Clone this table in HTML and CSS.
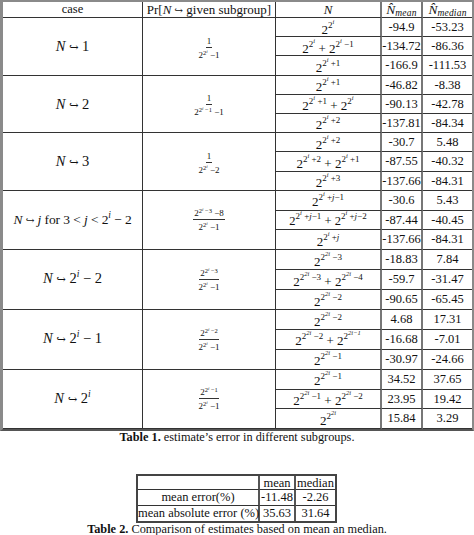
FILE: index.html
```html
<!DOCTYPE html>
<html>
<head>
<meta charset="utf-8">
<link rel="stylesheet" href="styles.css">
</head>
<body>
<div class="t1">
  <div class="h">case</div>
  <div class="h">Pr[<i>N</i> <span class="arr">↪</span> given subgroup]</div>
  <div class="h sep"><i>N</i></div>
  <div class="h nb sep"><i>N̂</i><sub>mean</sub></div>
  <div class="h nb last"><i>N̂</i><sub>median</sub></div>

  <div class="case"><i>N</i> <span class="arr">↪</span> 1</div>
  <div class="fr"><span class="frac"><span class="num">1</span><span class="den">2<sup class="s1">2<sup class="s2">i</sup></sup> −1</span></span></div>
  <div class="n">2<sup class="e1">2<sup class="e2">i</sup></sup></div>
  <div class="v sep">-94.9</div><div class="v last">-53.23</div>
  <div class="n">2<sup class="e1">2<sup class="e2">i</sup></sup> + 2<sup class="e1">2<sup class="e2">i</sup> −1</sup></div>
  <div class="v sep">-134.72</div><div class="v last">-86.36</div>
  <div class="n">2<sup class="e1">2<sup class="e2">i</sup> +1</sup></div>
  <div class="v sep">-166.9</div><div class="v last">-111.53</div>

  <div class="case"><i>N</i> <span class="arr">↪</span> 2</div>
  <div class="fr"><span class="frac"><span class="num">1</span><span class="den">2<sup class="s1">2<sup class="s2">i</sup> −1</sup> −1</span></span></div>
  <div class="n">2<sup class="e1">2<sup class="e2">i</sup> +1</sup></div>
  <div class="v sep">-46.82</div><div class="v last">-8.38</div>
  <div class="n">2<sup class="e1">2<sup class="e2">i</sup> +1</sup> + 2<sup class="e1">2<sup class="e2">i</sup></sup></div>
  <div class="v sep">-90.13</div><div class="v last">-42.78</div>
  <div class="n">2<sup class="e1">2<sup class="e2">i</sup> +2</sup></div>
  <div class="v sep">-137.81</div><div class="v last">-84.34</div>

  <div class="case"><i>N</i> <span class="arr">↪</span> 3</div>
  <div class="fr"><span class="frac"><span class="num">1</span><span class="den">2<sup class="s1">2<sup class="s2">i</sup></sup> −2</span></span></div>
  <div class="n">2<sup class="e1">2<sup class="e2">i</sup> +2</sup></div>
  <div class="v sep">-30.7</div><div class="v last">5.48</div>
  <div class="n">2<sup class="e1">2<sup class="e2">i</sup> +2</sup> + 2<sup class="e1">2<sup class="e2">i</sup> +1</sup></div>
  <div class="v sep">-87.55</div><div class="v last">-40.32</div>
  <div class="n">2<sup class="e1">2<sup class="e2">i</sup> +3</sup></div>
  <div class="v sep">-137.66</div><div class="v last">-84.31</div>

  <div class="case tight"><i>N</i> <span class="arr">↪</span> <i>j</i> for 3 &lt; <i>j</i> &lt; 2<sup class="ci">i</sup> − 2</div>
  <div class="fr"><span class="frac"><span class="num">2<sup class="s1">2<sup class="s2">i</sup> −3</sup> −8</span><span class="den">2<sup class="s1">2<sup class="s2">i</sup></sup> −1</span></span></div>
  <div class="n">2<sup class="e1">2<sup class="e2">i</sup> +<i>j</i>−1</sup></div>
  <div class="v sep">-30.6</div><div class="v last">5.43</div>
  <div class="n tightn">2<sup class="e1">2<sup class="e2">i</sup> +<i>j</i>−1</sup> + 2<sup class="e1">2<sup class="e2">i</sup> +<i>j</i>−2</sup></div>
  <div class="v sep">-87.44</div><div class="v last">-40.45</div>
  <div class="n">2<sup class="e1">2<sup class="e2">i</sup> +<i>j</i></sup></div>
  <div class="v sep">-137.66</div><div class="v last">-84.31</div>

  <div class="case"><i>N</i> <span class="arr">↪</span> 2<sup class="ci">i</sup> − 2</div>
  <div class="fr"><span class="frac"><span class="num">2<sup class="s1">2<sup class="s2">i</sup> −3</sup></span><span class="den">2<sup class="s1">2<sup class="s2">i</sup></sup> −1</span></span></div>
  <div class="n">2<sup class="e1">2<sup class="e2">2i</sup> −3</sup></div>
  <div class="v sep">-18.83</div><div class="v last">7.84</div>
  <div class="n">2<sup class="e1">2<sup class="e2">2i</sup> −3</sup> + 2<sup class="e1">2<sup class="e2">2i</sup> −4</sup></div>
  <div class="v sep">-59.7</div><div class="v last">-31.47</div>
  <div class="n">2<sup class="e1">2<sup class="e2">2i</sup> −2</sup></div>
  <div class="v sep">-90.65</div><div class="v last">-65.45</div>

  <div class="case"><i>N</i> <span class="arr">↪</span> 2<sup class="ci">i</sup> − 1</div>
  <div class="fr"><span class="frac"><span class="num">2<sup class="s1">2<sup class="s2">i</sup> −2</sup></span><span class="den">2<sup class="s1">2<sup class="s2">i</sup></sup> −1</span></span></div>
  <div class="n">2<sup class="e1">2<sup class="e2">2i</sup> −2</sup></div>
  <div class="v sep">4.68</div><div class="v last">17.31</div>
  <div class="n">2<sup class="e1">2<sup class="e2">2i</sup> −2</sup> + 2<sup class="e1">2<sup class="e2">2i−1</sup></sup></div>
  <div class="v sep">-16.68</div><div class="v last">-7.01</div>
  <div class="n">2<sup class="e1">2<sup class="e2">2i</sup> −1</sup></div>
  <div class="v sep">-30.97</div><div class="v last">-24.66</div>

  <div class="case"><i>N</i> <span class="arr">↪</span> 2<sup class="ci">i</sup></div>
  <div class="fr"><span class="frac"><span class="num">2<sup class="s1">2<sup class="s2">i</sup> −1</sup></span><span class="den">2<sup class="s1">2<sup class="s2">i</sup></sup> −1</span></span></div>
  <div class="n">2<sup class="e1">2<sup class="e2">2i</sup> −1</sup></div>
  <div class="v sep">34.52</div><div class="v last">37.65</div>
  <div class="n">2<sup class="e1">2<sup class="e2">2i</sup> −1</sup> + 2<sup class="e1">2<sup class="e2">2i</sup> −2</sup></div>
  <div class="v sep">23.95</div><div class="v last">19.42</div>
  <div class="n">2<sup class="e1">2<sup class="e2">2i</sup></sup></div>
  <div class="v sep">15.84</div><div class="v last">3.29</div>
</div>
<p class="cap cap1"><b>Table 1.</b> estimate’s error in different subgroups.</p>

<div class="t2">
  <div class="c sepb"></div><div class="c sepb">mean</div><div class="c last">median</div>
  <div class="c sepb">mean error(%)</div><div class="c sepb">-11.48</div><div class="c last">-2.26</div>
  <div class="c sepb bot">mean absolute error (%)</div><div class="c sepb bot">35.63</div><div class="c last bot">31.64</div>
</div>
<p class="cap cap2"><b>Table 2.</b> Comparison of estimates based on mean an median.</p>
</body>
</html>
```

FILE: styles.css
```css
html, body {
  margin: 0;
  padding: 0;
  background: #fff;
}
body {
  font-family: "Liberation Serif", "Times New Roman", serif;
  color: #111;
  width: 474px;
}
sup, sub {
  line-height: 0;
}
.t1 {
  display: grid;
  grid-template-columns: 140px 133px 106px 41px 49px;
  grid-template-rows: 16px repeat(9, 19.2px) repeat(12, 19.9px);
  width: 474px;
  box-sizing: border-box;
  border-top: 2px solid #8a8a8a;
  border-left: 3px solid #8a8a8a;
  border-right: 2px solid #8a8a8a;
  border-bottom: 2px solid #555;
  font-size: 12.5px;
}
.t1 > div {
  box-sizing: border-box;
  display: block;
  text-align: center;
  line-height: 18px;
  border-right: 1px solid #333;
  border-bottom: 1px solid #333;
  white-space: nowrap;
  min-width: 0;
}
.t1 > div.sep { border-right: 2px solid #777; }
.t1 > div.last { border-right: none; }
.t1 > div.n { border-right: 2px solid #777; }
.t1 > .h { font-size: 13px; line-height: 15px; }
.t1 > .h:first-child { font-size: 12.5px; }
.t1 > .nb { font-size: 13.5px; }
.nb sub {
  font-style: italic;
  font-size: 9.5px;
  vertical-align: baseline;
  position: relative;
  top: 2px;
  letter-spacing: 0.2px;
}
.arr { font-family: "DejaVu Serif", serif; font-size: 0.78em; }
.case, .fr { grid-row: span 3; }
.t1 > .case { font-size: 14.5px; line-height: 57px; }
.t1 > .case.tight { font-size: 13.5px; letter-spacing: -0.1px; }
.t1 > .fr { line-height: 57px; }
.ci { font-size: 9.5px; font-style: italic; vertical-align: baseline; position: relative; top: -6px; }
.t1 > .n {
  font-size: 13px;
  line-height: 17px;
  padding-top: 2.5px;
}
.t1 > .n.tightn { font-size: 12.5px; }
.e1 { font-size: 9px; vertical-align: baseline; position: relative; top: -6px; }
.e2 { font-size: 6.5px; font-style: italic; vertical-align: baseline; position: relative; top: -4px; }
.t1 > .v { font-size: 12.5px; }
.frac {
  display: inline-flex;
  flex-direction: column;
  align-items: center;
  font-size: 9px;
  line-height: 1;
  vertical-align: middle;
}
.num {
  padding: 2px 1px 1px;
  border-bottom: 0.8px solid #333;
}
.den {
  padding: 3px 1px 0;
}
.s1 { font-size: 6.5px; vertical-align: baseline; position: relative; top: -3px; }
.s2 { font-size: 5px; font-style: italic; vertical-align: baseline; position: relative; top: -2px; }
.cap {
  margin: 0;
  text-align: center;
  font-size: 12.3px;
  line-height: 13px;
}
.t2 {
  display: grid;
  grid-template-columns: 122px 36px 39px;
  grid-template-rows: 14px 16px 15px;
  width: 201px;
  box-sizing: border-box;
  margin: 30px 0 0 136px;
  border: 2px solid #444;
  font-size: 12.5px;
}
.t2 .c {
  box-sizing: border-box;
  display: block;
  text-align: center;
  line-height: 14px;
  white-space: nowrap;
  border-bottom: 1px solid #333;
}
.t2 .c.sepb { border-right: 2px solid #555; }
.t2 .c.bot { border-bottom: none; }
```
